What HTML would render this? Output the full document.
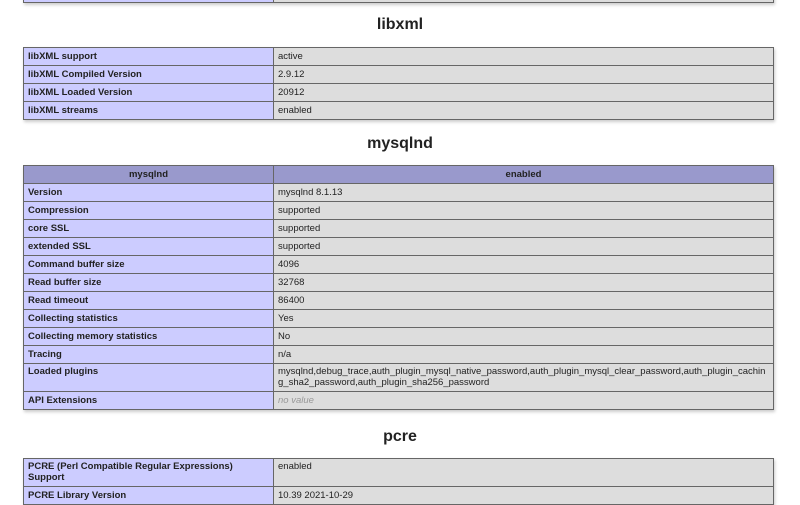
<!DOCTYPE html>
<html><head><style>
body{margin:0;background:#fff;font-family:"Liberation Sans",Arial,sans-serif;width:800px;height:504px;overflow:hidden;position:relative;color:#222}
h2{position:absolute;left:0;width:800px;margin:0;text-align:center;font-size:16px;font-weight:bold;line-height:20px}
table{position:absolute;left:23px;width:751px;border-collapse:collapse;box-shadow:1px 2px 3px #ccc;table-layout:fixed}
td,th{border:1px solid #666;font-size:9.5px;padding:0 4px;vertical-align:middle;height:17px;line-height:11px;text-align:left}
td.e{background:#ccf;font-weight:bold;width:241px}
td.v{background:#ddd;word-break:break-all}
th{background:#99c;font-weight:bold;text-align:center}
.h2r td{height:25px;vertical-align:top;padding-top:2px}
i{color:#999}
</style></head><body>
<table style="top:-16px"><tr><td class="e"></td><td class="v"></td></tr></table>
<h2 style="top:15px">libxml</h2>
<table style="top:47px">
<tr><td class="e">libXML support</td><td class="v">active</td></tr>
<tr><td class="e">libXML Compiled Version</td><td class="v">2.9.12</td></tr>
<tr><td class="e">libXML Loaded Version</td><td class="v">20912</td></tr>
<tr><td class="e">libXML streams</td><td class="v">enabled</td></tr>
</table>
<h2 style="top:134px">mysqlnd</h2>
<table style="top:165px">
<tr><th style="width:241px">mysqlnd</th><th>enabled</th></tr>
<tr><td class="e">Version</td><td class="v">mysqlnd 8.1.13</td></tr>
<tr><td class="e">Compression</td><td class="v">supported</td></tr>
<tr><td class="e">core SSL</td><td class="v">supported</td></tr>
<tr><td class="e">extended SSL</td><td class="v">supported</td></tr>
<tr><td class="e">Command buffer size</td><td class="v">4096</td></tr>
<tr><td class="e">Read buffer size</td><td class="v">32768</td></tr>
<tr><td class="e">Read timeout</td><td class="v">86400</td></tr>
<tr><td class="e">Collecting statistics</td><td class="v">Yes</td></tr>
<tr><td class="e">Collecting memory statistics</td><td class="v">No</td></tr>
<tr><td class="e">Tracing</td><td class="v">n/a</td></tr>
<tr class="h2r"><td class="e">Loaded plugins</td><td class="v">mysqlnd,debug_trace,auth_plugin_mysql_native_password,auth_plugin_mysql_clear_password,auth_plugin_caching_sha2_password,auth_plugin_sha256_password</td></tr>
<tr><td class="e">API Extensions</td><td class="v"><i>no value</i></td></tr>
</table>
<h2 style="top:427px">pcre</h2>
<table style="top:458px">
<tr class="h2r"><td class="e">PCRE (Perl Compatible Regular Expressions) Support</td><td class="v">enabled</td></tr>
<tr><td class="e">PCRE Library Version</td><td class="v">10.39 2021-10-29</td></tr>
</table>
</body></html>
